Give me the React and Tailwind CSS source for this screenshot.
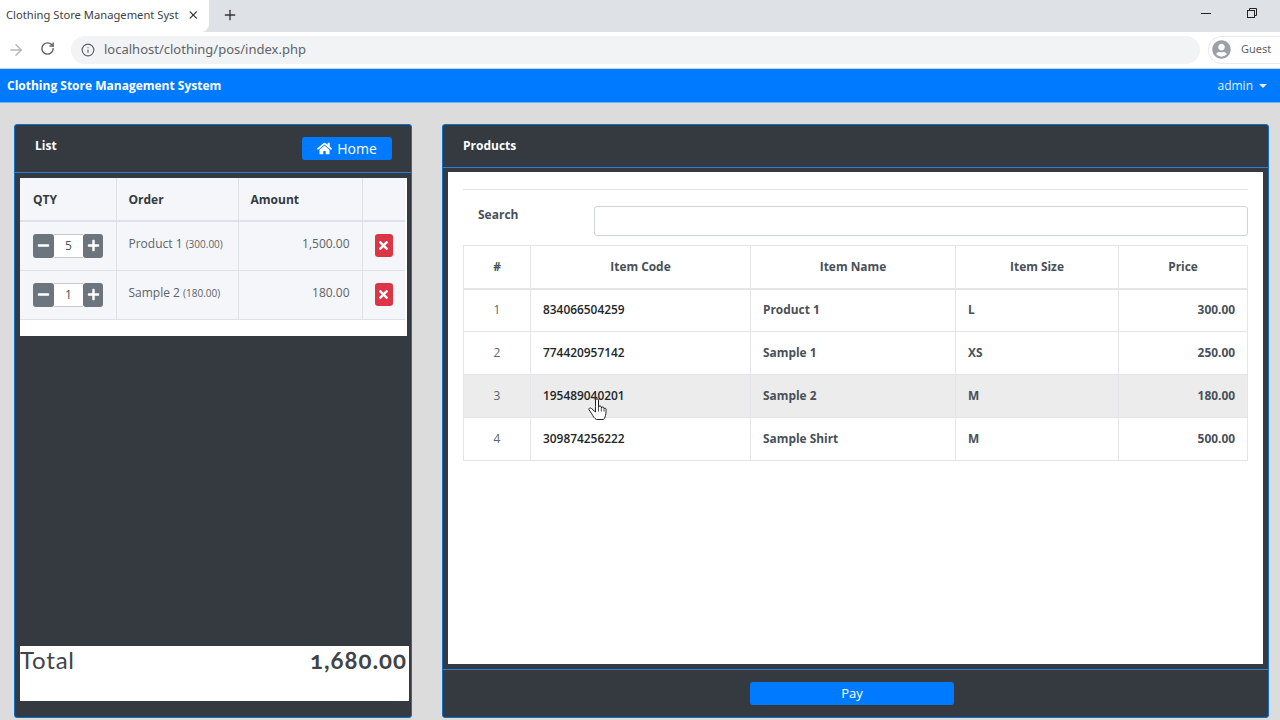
import React from "react";
import { FaHome, FaTimes, FaMinus, FaPlus, FaUserCircle } from "react-icons/fa";
import { ArrowRight, RotateCw, Info, X, Plus } from "lucide-react";

const products = [
  ["1", "834066504259", "Product 1", "L", "300.00"],
  ["2", "774420957142", "Sample 1", "XS", "250.00"],
  ["3", "195489040201", "Sample 2", "M", "180.00"],
  ["4", "309874256222", "Sample Shirt", "M", "500.00"],
];
const orders = [
  ["5", "Product 1", "(300.00)", "1,500.00"],
  ["1", "Sample 2", "(180.00)", "180.00"],
];

function Stepper({ qty }) {
  return (
    <div className="flex h-6 w-[70px] items-stretch">
      <div className="flex w-[21px] items-center justify-center rounded-[3px] bg-[#6c757d] text-white"><FaMinus size={13} /></div>
      <div className="flex w-[29px] items-center justify-center border-y border-[#c8c8c8] bg-white text-xs text-[#495057]">{qty}</div>
      <div className="flex w-[20px] items-center justify-center rounded-[3px] bg-[#6c757d] text-white"><FaPlus size={13} /></div>
    </div>
  );
}

export default function App() {
  return (
    <div className="flex h-[720px] w-[1280px] flex-col overflow-hidden bg-[#dcdcdc] text-[12px] text-[#343a40] [font-family:'Open_Sans',sans-serif]">
      {/* tab strip */}
      <div className="flex h-8 shrink-0 items-center bg-[#dee1e6]">
        <div className="flex h-8 w-[209px] items-center rounded-br-lg bg-white pb-[2px] pl-[6px] pr-[10px] [font-family:'Noto_Sans',sans-serif]">
          <span className="w-[173px] whitespace-nowrap text-[11.2px] text-[#3c4043]">Clothing Store Management Syst</span>
          <X size={14} strokeWidth={2.4} className="ml-[8px] text-[#333]" />
        </div>
        <Plus size={16} strokeWidth={2} className="mb-[2px] ml-[13px] text-[#333]" />
        <div className="mb-[6px] ml-auto flex items-center pr-[23px]">
          <div className="h-px w-[10px] bg-[#222]" />
          <svg className="ml-[36px]" width="10" height="10" viewBox="0 0 10 10" fill="none" stroke="#222"><rect x="0.5" y="2.5" width="7" height="7" /><path d="M2.5 2.5V.5h7v7h-2" /></svg>
        </div>
      </div>
      {/* toolbar */}
      <div className="flex h-[37px] shrink-0 items-center border-b border-[#cfd3da] bg-white">
        <ArrowRight size={18} className="mb-px ml-[7px] text-[#b5b7ba]" />
        <RotateCw size={15} strokeWidth={2.3} className="mb-[3px] ml-[15px] text-[#5f6368]" />
        <div className="ml-[16px] flex h-[28px] w-[1129px] items-center rounded-full bg-[#f1f3f4] pl-[10px]">
          <Info size={14} className="mb-px text-[#5f6368]" />
          <span className="mb-px ml-[9px] text-[13px] text-[#5f6368] [font-family:'Noto_Sans',sans-serif]">localhost/clothing/pos/index.php</span>
        </div>
        <div className="ml-[8px] flex h-[28px] flex-1 items-center rounded-l-full border border-r-0 border-[#e8eaed] pl-[3px]">
          <FaUserCircle size={19} className="mb-px text-[#9aa0a6]" />
          <span className="mb-px ml-[10px] text-[11px] text-[#5f6368] [font-family:'Noto_Sans',sans-serif]">Guest</span>
        </div>
      </div>
      {/* navbar */}
      <div className="flex h-[34px] shrink-0 items-center justify-between border-b border-[#6db3ff] bg-[#007bff] pl-[7px] pr-[13px] text-white">
        <span className="text-[12px] font-bold">Clothing Store Management System</span>
        <span className="flex items-center text-[12px] text-[#e2efff]">admin<span className="ml-[6px] h-0 w-0 border-x-[4px] border-t-[4px] border-x-transparent border-t-[#e2efff]" /></span>
      </div>

      <div className="flex flex-1 gap-[30px] pl-[14px] pt-[21px]">
        {/* List card */}
        <div className="flex h-[594px] w-[398px] flex-col rounded-[3px] border border-[#0f6fd0] bg-[#343a40]">
          <div className="flex h-[48px] shrink-0 items-start justify-between border-b border-[#2a7fd6] pl-[20px] pr-[19px] pt-[12px] text-white">
            <span className="text-[12px] font-bold">List</span>
            <div className="flex h-[23px] w-[90px] items-center justify-center gap-[5px] rounded-[3px] bg-[#007bff] text-[14px]">
              <FaHome size={15} /> Home
            </div>
          </div>
          <div className="mx-[5px] mt-[5px] h-[158px] w-[387px] bg-white">
            <table className="w-[385px] table-fixed border-collapse bg-[#f4f6f9]">
              <colgroup><col className="w-[96px]" /><col className="w-[122px]" /><col className="w-[124px]" /><col className="w-[43px]" /></colgroup>
              <thead>
                <tr className="h-[43px] border-b-2 border-[#dee2e6] text-left font-bold">
                  <th className="border-r border-[#dee2e6] pl-[13px] pt-px">QTY</th>
                  <th className="border-r border-[#dee2e6] pl-[12px] pt-px">Order</th>
                  <th className="border-r border-[#dee2e6] pl-[12px] pt-px">Amount</th>
                  <th />
                </tr>
              </thead>
              <tbody>
                {orders.map((o) => (
                  <tr key={o[1]} className="h-[49px] border-b border-[#dee2e6]">
                    <td className="border-r border-[#dee2e6] pl-[13px]"><Stepper qty={o[0]} /></td>
                    <td className="border-r border-[#dee2e6] pb-[4px] pl-[12px] text-[#5c636a]">{o[1]} <span className="text-[10px]">{o[2]}</span></td>
                    <td className="border-r border-[#dee2e6] pb-[4px] pr-[12px] text-right text-[#5c636a]">{o[3]}</td>
                    <td>
                      <div className="ml-[12px] flex h-[23px] w-[18px] items-center justify-center rounded-[3px] bg-[#dc3545] text-white"><FaTimes size={13} /></div>
                    </td>
                  </tr>
                ))}
              </tbody>
            </table>
          </div>
          <div className="mb-[16px] ml-[5px] mt-auto h-[55px] w-[389px] bg-white">
            <div className="flex items-start justify-between pr-[2px] leading-[28px] text-[#3f4449] [font-family:'Lato',sans-serif]">
              <span className="text-[24px] tracking-[0.8px]">Total</span>
              <span className="text-[24px] font-bold tracking-[1px] oldstyle-nums">1,680.00</span>
            </div>
          </div>
        </div>

        {/* Products card */}
        <div className="flex h-[594px] w-[827px] flex-col rounded-[3px] border border-[#0f6fd0] bg-[#343a40]">
          <div className="flex h-[43px] shrink-0 items-start border-b border-[#2a7fd6] pl-[20px] pt-[12px] text-white">
            <span className="text-[12px] font-bold">Products</span>
          </div>
          <div className="relative mx-[5px] mt-[4px] h-[492px] w-[815px] bg-white px-[15px]">
            <div className="mt-[17px] h-px bg-[#e3e3e3]" />
            <div className="flex items-start pt-[16px]">
              <span className="w-[131px] pl-[15px] font-bold text-[#495057]">Search</span>
              <div className="h-[30px] flex-1 rounded-[3px] border border-[#ced4da] bg-white" />
            </div>
            <table className="mt-[9px] w-[784px] table-fixed border-collapse border border-[#e3e5e8] text-[11.9px]">
              <colgroup><col className="w-[67px]" /><col className="w-[220px]" /><col className="w-[205px]" /><col className="w-[163px]" /><col className="w-[129px]" /></colgroup>
              <thead>
                <tr className="h-[43px] border-b-2 border-[#e3e5e8] text-center font-bold text-[#495057]">
                  {["#", "Item Code", "Item Name", "Item Size", "Price"].map((h) => (
                    <th key={h} className="border-r border-[#e3e5e8] font-bold">{h}</th>
                  ))}
                </tr>
              </thead>
              <tbody>
                {products.map((p) => (
                  <tr key={p[0]} className={`h-[43px] border-b border-[#e3e5e8] ${p[0] === "3" ? "bg-[#ececec]" : "bg-white"}`}>
                    <td className="border-r border-[#e3e5e8] text-center text-[#5c636a]">{p[0]}</td>
                    <td className="border-r border-[#e3e5e8] pl-[12px] font-semibold text-[#212529]">{p[1]}</td>
                    <td className="border-r border-[#e3e5e8] pl-[12px] font-bold text-[#495057]">{p[2]}</td>
                    <td className="border-r border-[#e3e5e8] pl-[12px] font-bold text-[#495057]">{p[3]}</td>
                    <td className="pr-[12px] text-right font-bold text-[#495057]">{p[4]}</td>
                  </tr>
                ))}
              </tbody>
            </table>
            <svg className="absolute left-[140px] top-[226px]" width="19" height="23" viewBox="0 0 19 23" fill="white" stroke="#222" strokeWidth="1" strokeLinejoin="round">
              <path d="M7.5 8.500V2c0-1.500 3-1.500 3 0V9c.2-1.500 2.600-1.500 2.800 0l.1 1c.3-1.300 2.400-1.300 2.600 0l.1.8c.3-1 2-.8 2 .7 0 3-.3 5.500-1.100 7.500-.5 1.200-1 2-1.500 2.500h-7c-2.200-1-3.600-3.400-4.700-5.700L1 11.800c-.7-1.500 1.300-2.500 2.500-1.300L7.500 14z" />
              <path d="M10.500 9v4.500M13.300 10v3.500M16 10.800v2.700" fill="none" strokeWidth="0.8" />
            </svg>
          </div>
          <div className="mt-[5px] flex flex-1 justify-center border-t border-[#2a7fd6] pr-[7px] pt-[12px]">
            <div className="flex h-[23px] w-[204px] items-center justify-center rounded-[3px] bg-[#007bff] text-[13px] text-white">Pay</div>
          </div>
        </div>
      </div>
    </div>
  );
}
